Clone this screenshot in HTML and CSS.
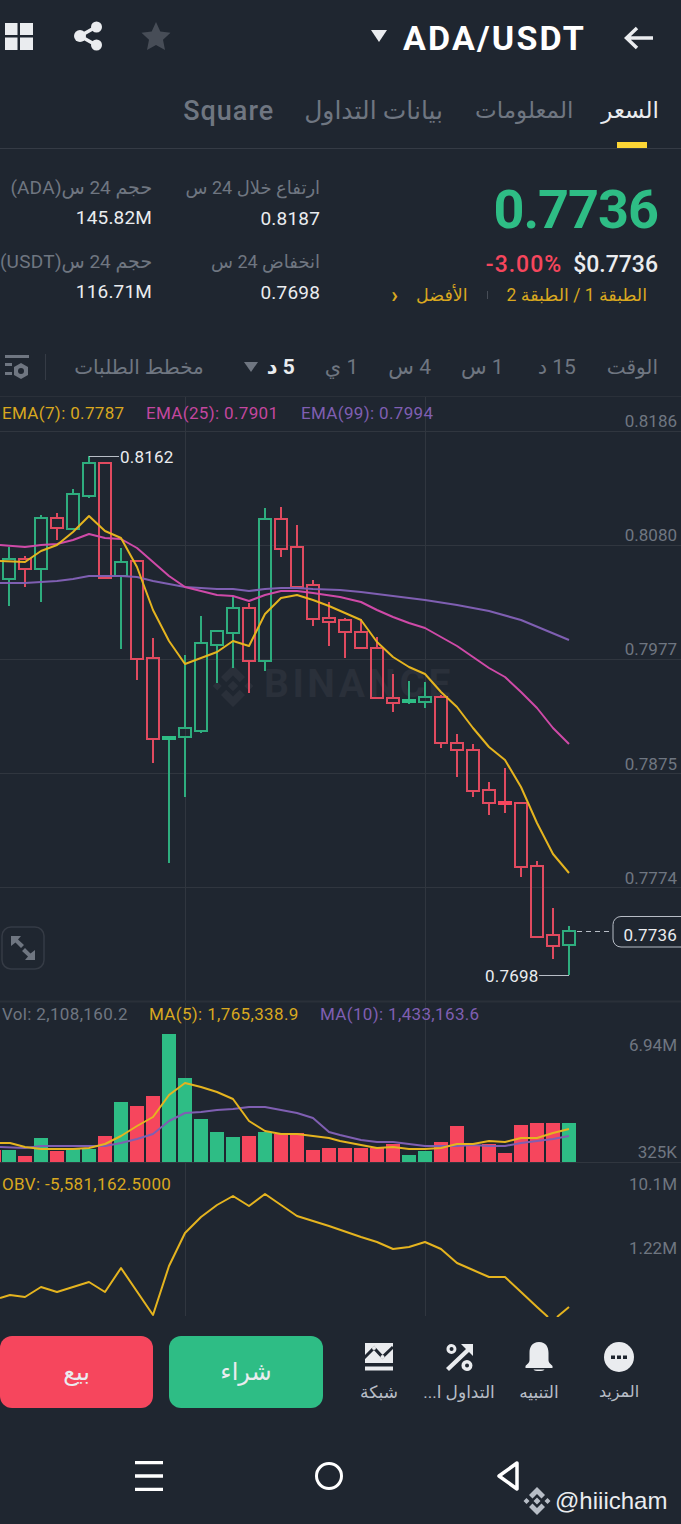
FILE: index.html
```html
<!doctype html>
<html dir="rtl" lang="ar">
<head>
<meta charset="utf-8">
<title>ADA/USDT</title>
<link rel="stylesheet" href="styles.css">
</head>
<body>
<header class="topbar">
	<svg class="icon-back" viewBox="0 0 30 24"><path d="M13 2 2.500 12 13 22M3 12H29"/></svg>
	<h1 class="pair">ADA/USDT</h1>
	<svg class="icon-caret" viewBox="0 0 18 14"><path d="M1 1H17L9 13Z"/></svg>
	<div class="topbar-tools">
		<svg class="icon-star" viewBox="0 0 30 30"><path d="M15 1 19.300 10.500 29.500 11.700 22 18.700 24 29 15 23.900 6 29 8 18.700 .5 11.700 10.700 10.500Z"/></svg>
		<svg class="icon-share" viewBox="0 0 30 30"><path class="share-line" d="M23 6 7 15 23 24"/><circle cx="7" cy="15" r="6"/><circle cx="23.500" cy="6" r="5.500"/><circle cx="23.500" cy="24" r="5.500"/></svg>
		<svg class="icon-grid" viewBox="0 0 28 27"><path d="M0 0H12.500V12H0ZM15 0H28V12H15ZM0 14.500H12.500V27H0ZM15 14.500H28V27H15Z"/></svg>
	</div>
</header>

<nav class="tabs">
	<a class="tab active">السعر</a>
	<a class="tab tab-info">المعلومات</a>
	<a class="tab tab-data">بيانات التداول</a>
	<a class="tab tab-latin">Square</a>
</nav>

<section class="stats">
	<div class="price-box">
		<div class="price-big">0.7736</div>
		<div class="price-line"><span class="price-usd">$0.7736</span><span class="price-chg" dir="ltr">-3.00%</span></div>
		<div class="tags"><span>الطبقة 1 / الطبقة 2</span><i class="tag-sep"></i><span>الأفضل</span><b class="tag-more">‹</b></div>
	</div>
	<div class="stat-col stat-col-a">
		<div class="stat"><div class="stat-label">ارتفاع خلال 24 س</div><div class="stat-val">0.8187</div></div>
		<div class="stat"><div class="stat-label">انخفاض 24 س</div><div class="stat-val">0.7698</div></div>
	</div>
	<div class="stat-col stat-col-b">
		<div class="stat"><div class="stat-label">حجم 24 س(ADA)</div><div class="stat-val">145.82M</div></div>
		<div class="stat"><div class="stat-label">حجم 24 س(USDT)</div><div class="stat-val">116.71M</div></div>
	</div>
</section>

<nav class="intervals">
	<a class="iv iv-time">الوقت</a>
	<a class="iv iv-15">15 د</a>
	<a class="iv">1 س</a>
	<a class="iv">4 س</a>
	<a class="iv">1 ي</a>
	<a class="iv iv-on">5 د</a>
	<svg class="iv-caret" viewBox="0 0 14 10"><path d="M0 0H14L7 10Z"/></svg>
	<a class="iv iv-depth">مخطط الطلبات</a>
	<i class="iv-sep"></i>
	<svg class="icon-tune" viewBox="0 0 24 24"><path d="M0 0H24V3H0ZM0 8H7V11H0ZM0 17H7V20H0ZM16 8 23 12V20L16 24 9 20V12Z"/><circle class="tune-hole" cx="16" cy="16" r="3"/></svg>
</nav>

<div class="chart">
<svg class="chart-svg" viewBox="0 397 681 920">
	<!-- grid -->
	<path class="grid" d="M0 431.500H681M0 545.500H681M0 659.500H681M0 773.500H681M0 887.500H681M0 1162.500H681"/>
	<path class="grid" d="M185.500 397V1316M425.500 397V1316"/>
	<path class="sep" d="M0 1001.500H681"/>

	<!-- watermark -->
	<path class="wm" transform="translate(212 665) scale(1.500)" d="M14 0 22 8 18.500 11.500 14 7 9.500 11.500 6 8ZM3.500 11 6.500 14 3.500 17 .5 14ZM24.500 11 27.500 14 24.500 17 21.500 14ZM14 10.500 17.500 14 14 17.500 10.500 14ZM6 20 9.500 16.500 14 21 18.500 16.500 22 20 14 28Z"/>
	<text class="wm-text" x="264" y="697">BINANCE</text>

	<!-- candles, wick above, wick below, body -->
	<path class="candle-up" d="
		M9 547V559M9 579V606M3 559h12v20h-12z
		M41 515V518M41 569V602M35 518h12v51h-12z
		M73 489V494M67 494h12v35h-12z
		M89 456V463M89 496V498M83 463h12v33h-12z
		M121 548V562M121 576V649M115 562h12v14h-12z
		M169 736V863
		M185 655V728M185 737V797M179 728h12v9h-12z
		M201 616V643M201 731V733M195 643h12v88h-12z
		M217 645V683M211 631h12v14h-12z
		M233 597V608M233 633V668M227 608h12v25h-12z
		M265 508V519M265 661V671M259 519h12v142h-12z
		M409 681V704
		M425 682V697M425 702V708M419 697h12v5h-12z
		M569 926V931M569 945V975M563 931h12v14h-12z"/>
	<path class="candle-doji-up" d="M162 738H176M402 701H416"/>
	<path class="candle-down" d="
		M25 556V559M25 569V587M19 559h12v10h-12z
		M57 513V518M57 528V540M51 518h12v10h-12z
		M105 462V463M99 463h12v115h-12z
		M137 659V680M131 561h12v98h-12z
		M153 638V658M153 739V763M147 658h12v81h-12z
		M249 603V608M249 661V693M243 608h12v53h-12z
		M281 507V519M281 549V557M275 519h12v30h-12z
		M297 525V547M291 547h12v40h-12z
		M313 580V585M313 619V626M307 585h12v34h-12z
		M329 602V618M329 622V646M323 618h12v4h-12z
		M345 618V620M345 632V658M339 620h12v12h-12z
		M361 619V632M355 632h12v16h-12z
		M377 637V648M371 648h12v50h-12z
		M393 674V698M393 703V712M387 698h12v5h-12z
		M441 695V697M441 743V748M435 697h12v46h-12z
		M457 734V743M457 750V777M451 743h12v7h-12z
		M473 744V750M473 791V797M467 750h12v41h-12z
		M489 782V790M489 803V815M483 790h12v13h-12z
		M505 768V813
		M521 802V803M521 867V877M515 803h12v64h-12z
		M537 861V866M531 866h12v71h-12z
		M553 908V935M553 946V959M547 935h12v11h-12z"/>
	<path class="candle-doji-down" d="M498 803H512"/>

	<!-- ema lines -->
	<polyline class="ln ln-pur" points="0,583 25,583 41,582 57,581 73,579 89,576 121,576 137,577 153,581 169,584 185,587 201,588 217,589 233,589 249,591 265,589 281,588 297,588 313,589 340,590 361,592 393,596 425,600 457,605 489,611 521,620 545,630 569,640"/>
	<polyline class="ln ln-mag" points="0,545 25,547 41,545 57,544 73,540 89,534 105,538 121,539 137,548 153,562 169,576 185,587 201,591 217,595 233,596 249,601 265,595 281,591 297,591 313,593 340,597 361,602 377,610 393,617 409,623 425,628 441,637 457,646 473,657 489,668 505,677 521,692 537,708 553,728 569,744"/>
	<polyline class="ln ln-yel" points="0,561 25,562 41,551 57,545 73,532 89,516 105,531 121,538 137,567 153,610 169,641 185,664 201,658 217,652 233,641 249,646 265,614 281,598 297,595 313,600 329,606 345,613 361,620 377,642 393,657 409,667 425,674 441,692 457,707 473,728 489,747 505,760 521,787 537,823 553,854 569,873"/>

	<!-- extremes and last price -->
	<path class="hi-lo" d="M89 456.500H119M539 975.500H569"/>
	<text class="hi-lo-text" x="120" y="463">0.8162</text>
	<text class="hi-lo-text" x="485" y="982">0.7698</text>
	<path class="last-dash" d="M577 931.500H613"/>
	<path class="last-box" d="M681 916.500H621a8 8 0 0 0-8 8V939a8 8 0 0 0 8 8H681"/>
	<text class="last-text" x="677" y="941" text-anchor="end">0.7736</text>

	<!-- legends -->
	<text class="leg c-yel" x="2" y="419">EMA(7): 0.7787</text>
	<text class="leg c-mag" x="146" y="419">EMA(25): 0.7901</text>
	<text class="leg c-pur" x="301" y="419">EMA(99): 0.7994</text>
	<text class="leg c-gray" x="2" y="1020">Vol: 2,108,160.2</text>
	<text class="leg c-yel" x="149" y="1020">MA(5): 1,765,338.9</text>
	<text class="leg c-pur" x="320" y="1020">MA(10): 1,433,163.6</text>
	<text class="leg c-yel" x="2" y="1190">OBV: -5,581,162.5000</text>

	<!-- price axis -->
	<text class="axis" x="677" y="427" text-anchor="end">0.8186</text>
	<text class="axis" x="677" y="541" text-anchor="end">0.8080</text>
	<text class="axis" x="677" y="655" text-anchor="end">0.7977</text>
	<text class="axis" x="677" y="770" text-anchor="end">0.7875</text>
	<text class="axis" x="677" y="884" text-anchor="end">0.7774</text>
	<text class="axis" x="677" y="1051" text-anchor="end">6.94M</text>
	<text class="axis" x="677" y="1158" text-anchor="end">325K</text>
	<text class="axis" x="677" y="1190" text-anchor="end">10.1M</text>
	<text class="axis" x="677" y="1254" text-anchor="end">1.22M</text>

	<!-- fullscreen button -->
	<rect class="full-btn" x="2" y="927" width="42" height="42" rx="9"/>
	<path class="full-arrows" d="M11 936H21L18 939.500 24 945 21 948 15.500 942.500 11 946ZM35 960H25L28 956.500 22 951 25 948 30.500 953.500 35 950Z"/>

	<!-- volume bars -->
	<path class="bar-up" d="M2 1150h14v12h-14zM34 1138h14v24h-14zM66 1149h14v13h-14zM82 1149h14v13h-14zM114 1102h14v60h-14zM162 1034h14v128h-14zM178 1078h14v84h-14zM194 1119h14v43h-14zM210 1132h14v30h-14zM226 1137h14v25h-14zM258 1132h14v30h-14zM402 1155h14v7h-14zM418 1151h14v11h-14zM562 1123h14v39h-14z"/>
	<path class="bar-down" d="M0 1150h1v12h-1zM18 1156h14v6h-14zM50 1151h14v11h-14zM98 1136h14v26h-14zM130 1106h14v56h-14zM146 1096h14v66h-14zM242 1136h14v26h-14zM274 1134h14v28h-14zM290 1133h14v29h-14zM306 1150h14v12h-14zM322 1148h14v14h-14zM338 1148h14v14h-14zM354 1148h14v14h-14zM370 1148h14v14h-14zM386 1144h14v18h-14zM434 1142h14v20h-14zM450 1126h14v36h-14zM466 1145h14v17h-14zM482 1144h14v18h-14zM498 1153h14v9h-14zM514 1125h14v37h-14zM530 1123h14v39h-14zM546 1123h14v39h-14z"/>
	<polyline class="ln ln-pur" points="0,1147 25,1148 41,1146 89,1146 105,1146 121,1143 137,1139 153,1134 169,1121 185,1113 201,1112 217,1110 233,1109 249,1107 265,1107 281,1110 297,1113 313,1118 329,1132 340,1135 361,1140 377,1142 393,1142 409,1144 425,1146 441,1146 457,1146 473,1145 489,1146 505,1146 521,1143 537,1141 553,1139 569,1136"/>
	<polyline class="ln ln-yel" points="0,1143 10,1143 25,1147 41,1149 57,1149 73,1149 89,1148 105,1144 121,1136 137,1126 153,1117 169,1095 185,1083 201,1087 217,1092 233,1099 249,1121 265,1131 281,1134 297,1134 313,1136 329,1138 340,1141 361,1145 377,1148 393,1147 409,1149 425,1149 441,1148 457,1144 473,1144 489,1141 505,1142 521,1138 537,1138 553,1133 569,1129"/>

	<!-- obv -->
	<polyline class="ln ln-yel" points="0,1298 10,1295 25,1297 41,1287 57,1292 73,1287 89,1282 105,1292 121,1268 153,1315 169,1266 185,1233 201,1217 217,1205 233,1196 249,1206 265,1194 281,1205 297,1216 313,1221 329,1226 361,1237 377,1242 393,1249 409,1247 425,1242 441,1249 457,1263 473,1270 489,1277 505,1277 521,1292 537,1307 548,1317"/>
	<polyline class="ln ln-yel" points="557,1317 569,1307"/>
</svg>
</div>

<section class="actions">
	<a class="act act-more">
		<svg class="act-icon" viewBox="0 0 30 30"><circle cx="15" cy="15" r="15"/><path class="dots" d="M7 13.500h4v3.500h-4zM13 13.500h4v3.500h-4zM19 13.500h4v3.500h-4z"/></svg>
		<span>المزيد</span>
	</a>
	<a class="act">
		<svg class="act-icon" viewBox="0 0 30 30"><path d="M15 0C8 0 5.500 5 5.500 11V18C5.500 21 3 22 1.500 24V26H28.500V24C27 22 24.500 21 24.500 18V11C24.500 5 22 0 15 0ZM9.500 27.500C10.500 29.500 19.500 29.500 20.500 27.500Z"/></svg>
		<span>التنبيه</span>
	</a>
	<a class="act">
		<svg class="act-icon" viewBox="0 0 30 30"><path d="M17 2H29V14L25 10 5 29 2 26 22 7ZM7.500 2A5 5 0 1 1 7.400 12 5 5 0 0 1 7.500 2ZM7.500 5A2 2 0 1 0 7.600 9 2 2 0 0 0 7.500 5ZM23 18A5.500 5.500 0 1 1 22.900 29 5.500 5.500 0 0 1 23 18ZM23 21.500A2 2 0 1 0 23.100 25.500 2 2 0 0 0 23 21.500Z"/></svg>
		<span>التداول ا...</span>
	</a>
	<a class="act">
		<svg class="act-icon" viewBox="0 0 30 30"><path d="M1 1H29V21H1ZM1 24.500H29V28.500H1Z"/><path class="grid-zig" d="M0 16 10 6 18.500 15 29 5"/><circle class="grid-node" cx="10" cy="6" r="2"/><circle class="grid-node" cx="18.500" cy="15" r="2"/></svg>
		<span>شبكة</span>
	</a>
	<div class="trade-btns">
		<a class="btn btn-buy">شراء</a>
		<a class="btn btn-sell">بيع</a>
	</div>
</section>

<footer class="sysnav">
	<svg class="nav-back" viewBox="0 0 26 32"><path d="M22 3 4 16 22 29Z"/></svg>
	<i class="nav-home"></i>
	<svg class="nav-menu" viewBox="0 0 28 30"><path d="M0 1.500H28M0 15H28M0 28.500H28"/></svg>
</footer>

<div class="credit">
	<svg class="credit-logo" viewBox="0 0 28 28"><path d="M14 0 22 8 18.500 11.500 14 7 9.500 11.500 6 8ZM3.500 11 6.500 14 3.500 17 .5 14ZM24.500 11 27.500 14 24.500 17 21.500 14ZM14 10.500 17.500 14 14 17.500 10.500 14ZM6 20 9.500 16.500 14 21 18.500 16.500 22 20 14 28Z"/></svg>
	<span class="credit-name">@hiiicham</span>
</div>
</body>
</html>
```
FILE: styles.css
```css
html, body {
	margin: 0;
	padding: 0;
}

body {
	position: relative;
	width: 681px;
	height: 1524px;
	overflow: hidden;
	background: #1f2630;
	color: #eaecef;
	font-family: Roboto, "Noto Sans", "DejaVu Sans", sans-serif;
}

svg {
	display: block;
}

/* top bar */
.topbar {
	display: flex;
	align-items: center;
	height: 76px;
	padding: 0 27px 0 5px;
}

.icon-back {
	width: 30px;
	height: 24px;
	fill: none;
	stroke: #eaecef;
	stroke-width: 3.5;
}

.pair {
	margin: 0 38px 0 0;
	font-size: 34px;
	font-weight: 700;
	letter-spacing: 2.2px;
	line-height: 40px;
	color: #fff;
}

.icon-caret {
	width: 18px;
	height: 14px;
	margin: -5px 15px 0 0;
	fill: #eaecef;
}

.topbar-tools {
	display: flex;
	align-items: center;
	margin: -4px auto 0 0;
	gap: 38px;
}

.icon-star {
	width: 30px;
	height: 30px;
	fill: #474d57;
}

.icon-share {
	width: 30px;
	height: 30px;
	margin-left: 2px;
	fill: #eaecef;
}

.share-line {
	fill: none;
	stroke: #eaecef;
	stroke-width: 3.5;
}

.icon-grid {
	width: 28px;
	height: 27px;
	fill: #eaecef;
}

/* tabs */
.tabs {
	display: flex;
	height: 72px;
	padding-right: 22px;
	gap: 30px;
	border-bottom: 1px solid #353b45;
}

.tab {
	position: relative;
	padding-top: 17px;
	font-size: 23px;
	line-height: 36px;
	color: #6f7681;
}

.tab-info {
	margin-right: -2px;
}

.tab-data {
	margin-right: 2px;
	font-size: 25px;
}

.tab-latin {
	font-weight: 500;
	font-size: 27px;
	letter-spacing: 1px;
}

.active {
	color: #eaecef;
}

.active::after {
	content: "";
	position: absolute;
	right: 12px;
	bottom: 0;
	width: 30px;
	height: 6px;
	background: #fcd535;
}

/* stats */
.stats {
	display: flex;
	height: 191px;
	padding-right: 23px;
}

.price-box {
	width: 338px;
}

.price-big {
	margin-top: 27px;
	font-size: 54px;
	font-weight: 700;
	line-height: 68px;
	color: #2ebd85;
	letter-spacing: -1px;
	text-align: right;
}

.price-line {
	display: flex;
	gap: 11px;
	margin-top: 8px;
	font-size: 23px;
	font-weight: 500;
	line-height: 26px;
}

.price-chg {
	letter-spacing: 1px;
	color: #f6465d;
}

.tags {
	display: flex;
	align-items: center;
	margin: 5px 11px 0 0;
	font-size: 17.5px;
	line-height: 24px;
	white-space: nowrap;
	color: #d9a81f;
}

.tag-sep {
	width: 1px;
	height: 8px;
	margin: 0 19px;
	background: #474d57;
}

.tag-more {
	margin-right: 18px;
	font-size: 22px;
	line-height: 20px;
}

.stat-col {
	display: flex;
	flex-direction: column;
	gap: 18px;
	padding-top: 26px;
}

.stat-col-a {
	width: 168px;
}

.stat {
	height: 56px;
}

.stat-label {
	font-size: 18px;
	line-height: 26px;
	letter-spacing: .3px;
	white-space: nowrap;
	color: #6f7681;
}

.stat-col-b .stat-label {
	font-size: 19px;
}

.stat-val {
	margin-top: 5px;
	font-size: 19px;
	line-height: 24px;
	letter-spacing: .2px;
	color: #eaecef;
}

.stat-col-a .stat-val {
	margin-top: 6px;
}

/* interval bar */
.intervals {
	display: flex;
	align-items: center;
	height: 57px;
	padding: 0 23px 2px 0;
	box-sizing: border-box;
	border-bottom: 1px solid #2a3039;
}

.iv {
	font-size: 21px;
	line-height: 30px;
	color: #6f7681;
	margin-left: 30px;
}

.iv-time {
	margin-left: 31px;
	font-size: 20px;
}

.iv-15 {
	margin-left: 34px;
}

.iv-on {
	margin-left: 9px;
	font-weight: 700;
	color: #eaecef;
}

.iv-caret {
	width: 14px;
	height: 10px;
	margin-left: 40px;
	fill: #6f7681;
}

.iv-depth {
	margin-left: 28px;
	font-size: 20px;
}

.iv-sep {
	width: 1px;
	height: 26px;
	margin-left: 16px;
	background: #353b45;
}

.icon-tune {
	width: 24px;
	height: 24px;
	fill: #6f7681;
}

.tune-hole {
	fill: #1f2630;
}

/* chart */
.chart {
	height: 919px;
}

.chart-svg {
	width: 681px;
	height: 920px;
	direction: ltr;
}

.grid {
	fill: none;
	stroke: #30363f;
	stroke-width: 1;
}

.sep {
	stroke: #2a3039;
	stroke-width: 2;
}

.wm {
	fill: #2a303a;
}

.wm-text {
	font-family: Roboto, sans-serif;
	font-weight: 700;
	font-size: 39px;
	letter-spacing: 3.5px;
	fill: #2a303a;
}

.candle-up,
.candle-down {
	fill: none;
	stroke-width: 2;
}

.candle-up {
	stroke: #2ead7e;
}

.candle-down {
	stroke: #e04a5f;
}

.candle-doji-up {
	stroke: #2ebd85;
	stroke-width: 4;
}

.candle-doji-down {
	stroke: #f6465d;
	stroke-width: 4;
}

.ln {
	fill: none;
	stroke-width: 2;
	stroke-linejoin: round;
}

.ln-yel {
	stroke: #e5b41f;
}

.ln-mag {
	stroke: #cf4aa8;
}

.ln-pur {
	stroke: #7f5fb2;
}

.hi-lo {
	fill: none;
	stroke: #b7bdc6;
	stroke-width: 1;
}

.hi-lo-text,
.last-text {
	font-size: 17px;
	letter-spacing: .2px;
	fill: #eaecef;
}

.last-dash {
	stroke: #b7bdc6;
	stroke-dasharray: 5 4;
}

.last-box {
	fill: #1f2630;
	stroke: #b7bdc6;
}

.leg {
	font-size: 17px;
	letter-spacing: .35px;
}

.c-yel {
	fill: #d9a81f;
}

.c-mag {
	fill: #c4479f;
}

.c-pur {
	fill: #7f5fb2;
}

.c-gray {
	fill: #6f7681;
}

.axis {
	font-size: 17px;
	fill: #6f7681;
}

.full-btn {
	fill: none;
	stroke: #353b45;
	stroke-width: 1.5;
}

.full-arrows {
	fill: #6f7681;
}

.bar-up {
	fill: #2ebd85;
}

.bar-down {
	fill: #f6465d;
}

/* action row */
.actions {
	display: flex;
	align-items: flex-start;
	height: 92px;
	margin-top: 20px;
	padding-right: 22px;
}

.act {
	display: flex;
	flex-direction: column;
	align-items: center;
	width: 80px;
	padding-top: 6px;
	font-size: 17px;
	line-height: 24px;
	color: #b7bdc6;
	white-space: nowrap;
}

.act-more {
	font-size: 16px;
}

.act span {
	margin-top: 8px;
}

.act-icon {
	width: 30px;
	height: 30px;
	fill: #eaecef;
}

.dots {
	fill: #1f2630;
}

.grid-zig {
	fill: none;
	stroke: #1f2630;
	stroke-width: 3;
}

.grid-node {
	fill: #eaecef;
}

.trade-btns {
	display: flex;
	gap: 16px;
	margin-right: 16px;
}

.btn {
	display: flex;
	align-items: center;
	justify-content: center;
	width: 154px;
	height: 72px;
	border-radius: 12px;
	font-size: 24px;
	color: #eaecef;
}

.btn-buy {
	background: #2ebd85;
}

.btn-sell {
	width: 153px;
	background: #f6465d;
}

/* android nav */
.sysnav {
	display: flex;
	align-items: center;
	height: 30px;
	margin-top: 33px;
	padding-right: 160px;
}

.nav-back {
	width: 26px;
	height: 32px;
	fill: none;
	stroke: #fff;
	stroke-width: 3.5;
	stroke-linejoin: round;
}

.nav-home {
	width: 22px;
	height: 22px;
	margin-right: 152px;
	border: 3.5px solid #fff;
	border-radius: 50%;
}

.nav-menu {
	width: 28px;
	height: 30px;
	margin-right: 152px;
	fill: none;
	stroke: #fff;
	stroke-width: 3.5;
}

/* watermark lies over the nav */
.credit {
	position: absolute;
	left: 523px;
	top: 1486px;
	direction: ltr;
	display: flex;
	align-items: center;
	gap: 4px;
}

.credit-name {
	font-family: "Liberation Sans", Arial, sans-serif;
	font-size: 24px;
	line-height: 30px;
	color: #eaecef;
}

.credit-logo {
	width: 28px;
	height: 28px;
	fill: #b7bdc6;
}
```
